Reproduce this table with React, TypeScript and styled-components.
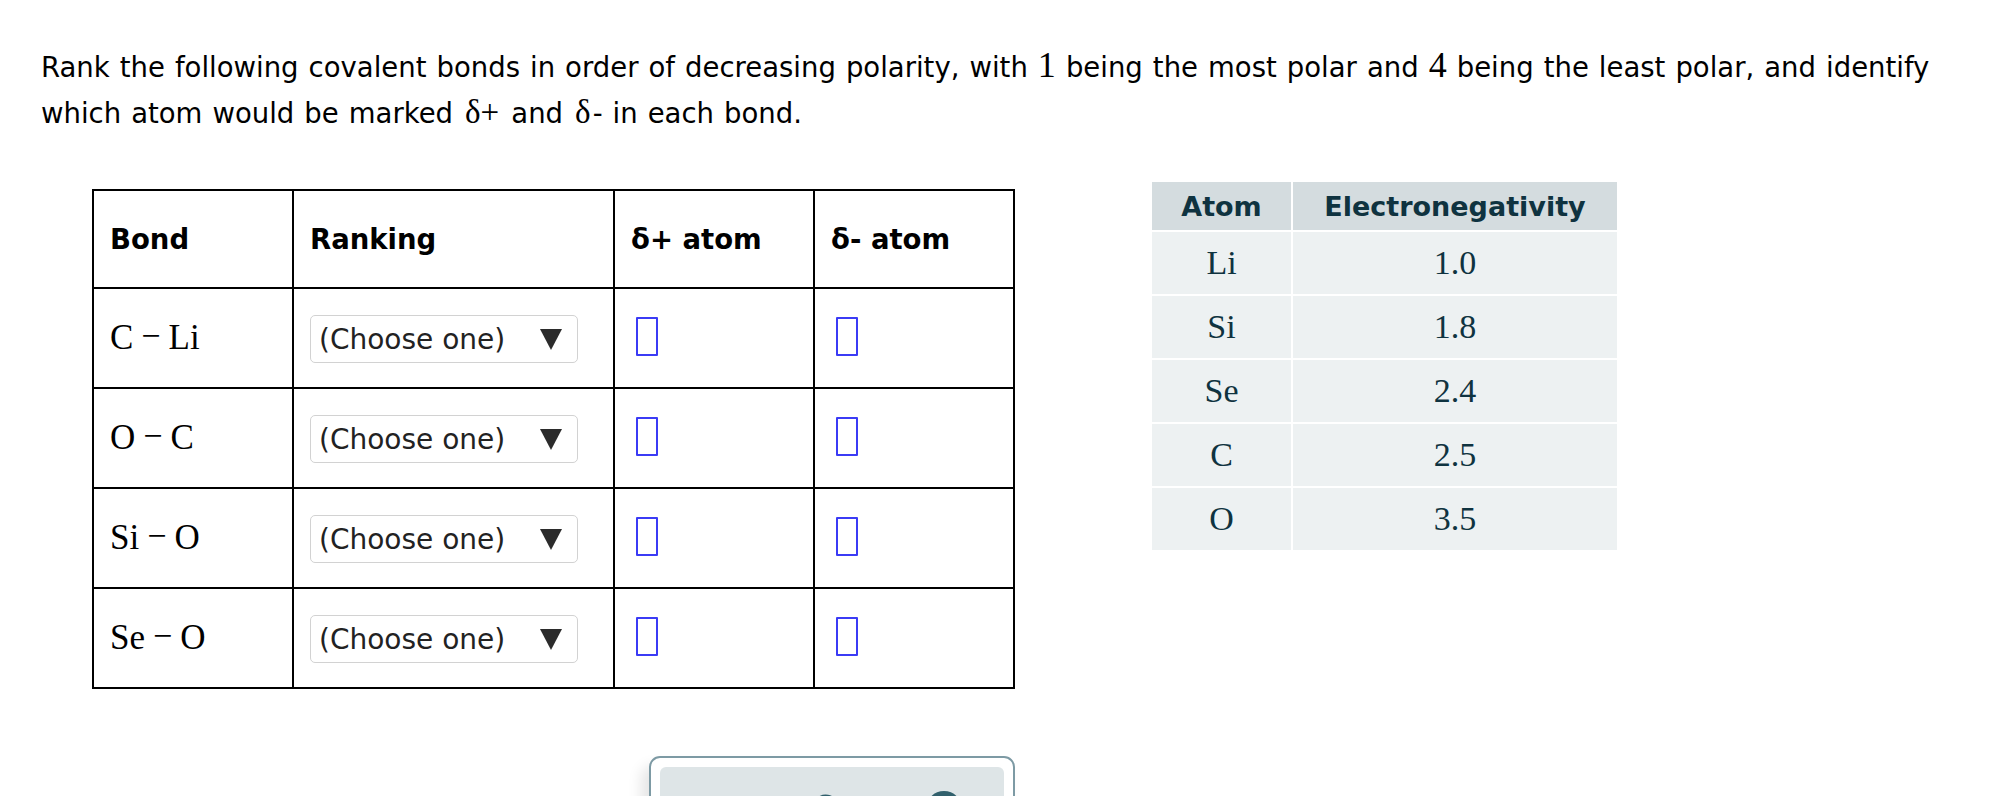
import React from "react";
import styled, { createGlobalStyle } from "styled-components";

const GlobalStyle = createGlobalStyle`
  html, body { margin: 0; padding: 0; background: #ffffff; }
  body { font-family: "DejaVu Sans", Verdana, sans-serif; color: #000; }
`;

const Page = styled.div`
  width: 2002px;
  height: 796px;
  box-sizing: border-box;
  padding: 44px 20px 0 41px;
  overflow: hidden;
`;

const Prompt = styled.p`
  margin: 0;
  font-size: 27.5px;
  line-height: 46px;
  word-spacing: 1.3px;
  color: #000;
`;

const MathNum = styled.span`
  font-family: "Liberation Serif", "Times New Roman", serif;
  font-size: 36px;
  line-height: 30px;
`;

const Delta = styled.span`
  font-family: "Liberation Serif", "Times New Roman", serif;
  font-size: 33px;
  line-height: 30px;
  padding: 0 2px;
`;

const Body = styled.div`
  display: flex;
  align-items: flex-start;
`;

const LeftColumn = styled.div`
  display: flex;
  flex-direction: column;
  align-items: flex-end;
  margin: 53px 0 0 51px;
`;

const BondTable = styled.table`
  border-collapse: collapse;
  table-layout: fixed;
  width: 921px;
`;

const HeadCell = styled.th`
  border: 2px solid #000;
  height: 96px;
  padding: 0 16px;
  text-align: left;
  vertical-align: middle;
  font-size: 27.5px;
  font-weight: bold;
  white-space: nowrap;
`;

const Cell = styled.td`
  border: 2px solid #000;
  height: 98px;
  padding: 0 16px;
  vertical-align: middle;
`;

const BondLabel = styled.span`
  font-family: "Liberation Serif", "Times New Roman", serif;
  font-size: 35px;
  white-space: nowrap;
`;

const Op = styled.span`
  display: inline-block;
  font-size: 34px;
  line-height: 1;
  margin: 0 8px;
  position: relative;
  top: -2px;
`;

const SelectBox = styled.div`
  display: flex;
  align-items: center;
  justify-content: space-between;
  box-sizing: border-box;
  width: 268px;
  height: 48px;
  margin-top: 2px;
  padding: 0 15px 0 8px;
  border: 1.5px solid #d2d2d2;
  border-radius: 5px;
  background: #fff;
  font-size: 28px;
  color: #222;
  cursor: pointer;
`;

const Caret = styled.svg`
  width: 22px;
  height: 21px;
  flex: none;
`;

const AtomSlot = styled.div`
  box-sizing: border-box;
  width: 22px;
  height: 39px;
  margin: -4px 0 0 5px;
  border: 2px solid #3b3bf5;
  border-radius: 1px;
`;

const Toolbar = styled.div`
  box-sizing: border-box;
  width: 366px;
  margin-top: 67px;
  padding: 9px;
  border: 2px solid #7d9aa4;
  border-radius: 11px;
  background: #fff;
  box-shadow: -8px 10px 14px rgba(0, 0, 0, 0.1);
`;

const ToolbarInner = styled.div`
  display: flex;
  justify-content: space-around;
  align-items: flex-start;
  height: 86px;
  padding-top: 24px;
  box-sizing: border-box;
  border-radius: 6px;
  background: #dee5e7;
`;

const ToolIcon = styled.svg<{ $size: number }>`
  width: ${(p) => p.$size}px;
  height: ${(p) => p.$size}px;
  margin-top: ${(p) => (36 - p.$size) / 2}px;
`;

const ENTable = styled.table`
  border-collapse: separate;
  border-spacing: 2px;
  margin: 44px 0 0 135px;
  table-layout: fixed;
  color: #0f3340;
`;

const ENHead = styled.th<{ $w: number }>`
  width: ${(p) => p.$w}px;
  height: 48px;
  padding: 0;
  background: #d4dcdf;
  font-size: 27px;
  font-weight: bold;
  text-align: center;
  vertical-align: middle;
`;

const ENCell = styled.td`
  height: 62px;
  padding: 0;
  background: #edf1f2;
  text-align: center;
  vertical-align: middle;
  font-family: "Liberation Serif", "Times New Roman", serif;
  font-size: 34px;
`;

const bonds: [string, string][] = [
  ["C", "Li"],
  ["O", "C"],
  ["Si", "O"],
  ["Se", "O"],
];

const electro: [string, string][] = [
  ["Li", "1.0"],
  ["Si", "1.8"],
  ["Se", "2.4"],
  ["C", "2.5"],
  ["O", "3.5"],
];

export default function App() {
  return (
    <>
      <GlobalStyle />
      <Page>
        <Prompt>
          Rank the following covalent bonds in order of decreasing polarity, with{" "}
          <MathNum>1</MathNum> being the most polar and <MathNum>4</MathNum> being the least
          polar, and identify which atom would be marked <Delta>δ+</Delta> and{" "}
          <Delta>δ</Delta>- in each bond.
        </Prompt>
        <Body>
          <LeftColumn>
            <BondTable>
              <colgroup>
                <col style={{ width: 200 }} />
                <col style={{ width: 321 }} />
                <col style={{ width: 200 }} />
                <col style={{ width: 200 }} />
              </colgroup>
              <thead>
                <tr>
                  <HeadCell>Bond</HeadCell>
                  <HeadCell>Ranking</HeadCell>
                  <HeadCell>δ+ atom</HeadCell>
                  <HeadCell>δ- atom</HeadCell>
                </tr>
              </thead>
              <tbody>
                {bonds.map(([a, b]) => (
                  <tr key={a + b}>
                    <Cell>
                      <BondLabel>
                        {a}
                        <Op>−</Op>
                        {b}
                      </BondLabel>
                    </Cell>
                    <Cell>
                      <SelectBox>
                        <span>(Choose one)</span>
                        <Caret viewBox="0 0 22 21">
                          <polygon points="0,0 22,0 11,21" fill="#2b2b2b" />
                        </Caret>
                      </SelectBox>
                    </Cell>
                    <Cell>
                      <AtomSlot />
                    </Cell>
                    <Cell>
                      <AtomSlot />
                    </Cell>
                  </tr>
                ))}
              </tbody>
            </BondTable>
            <Toolbar>
              <ToolbarInner>
                <ToolIcon $size={22} viewBox="0 0 22 22">
                  <path
                    d="M3 3 L19 19 M19 3 L3 19"
                    stroke="#31606c"
                    strokeWidth="3"
                    strokeLinecap="round"
                  />
                </ToolIcon>
                <ToolIcon $size={32} viewBox="0 0 32 32">
                  <path
                    d="M9 6 A 12 12 0 1 1 5 17"
                    fill="none"
                    stroke="#31606c"
                    strokeWidth="3"
                    strokeLinecap="round"
                  />
                  <polygon points="3,4 13,4 8,12" fill="#31606c" />
                </ToolIcon>
                <ToolIcon $size={36} viewBox="0 0 36 36">
                  <circle cx="18" cy="18" r="18" fill="#31606c" />
                  <text
                    x="18"
                    y="26"
                    textAnchor="middle"
                    fontSize="24"
                    fontWeight="bold"
                    fill="#fff"
                    fontFamily="DejaVu Sans, sans-serif"
                  >
                    ?
                  </text>
                </ToolIcon>
              </ToolbarInner>
            </Toolbar>
          </LeftColumn>
          <ENTable>
            <thead>
              <tr>
                <ENHead $w={139}>Atom</ENHead>
                <ENHead $w={324}>Electronegativity</ENHead>
              </tr>
            </thead>
            <tbody>
              {electro.map(([atom, val]) => (
                <tr key={atom}>
                  <ENCell>{atom}</ENCell>
                  <ENCell>{val}</ENCell>
                </tr>
              ))}
            </tbody>
          </ENTable>
        </Body>
      </Page>
    </>
  );
}
